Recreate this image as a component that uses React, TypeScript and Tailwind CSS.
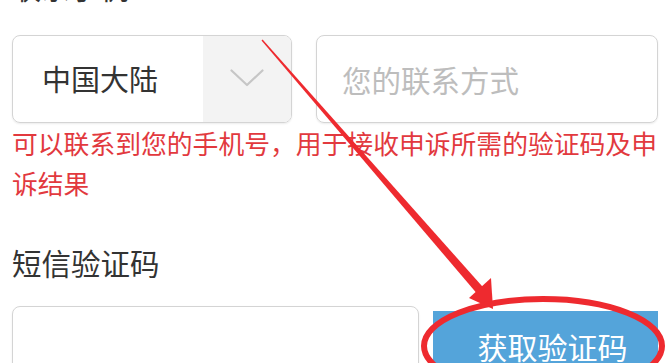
import React from 'react';

const cjk = { fontFamily: '"Noto Sans CJK SC", "Noto Sans", sans-serif' };

function Chevron() {
  return (
    <svg width="34" height="18" viewBox="0 0 34 18" fill="none">
      <path d="M1.5 1.5 L17 16 L32.5 1.5" stroke="#c6c6c6" strokeWidth="2.2" strokeLinecap="round" strokeLinejoin="round" />
    </svg>
  );
}

// red arrow + ellipse drawn over the screenshot
function Annotation() {
  return (
    <svg className="pointer-events-none absolute inset-0" width="672" height="363" viewBox="0 0 672 363">
      <polygon points="261.5,40.5 262.6,39.5 485.5,290 479,296" fill="#ee2a2f" />
      <polygon points="493,309 469,298 491,278" fill="#ee2a2f" />
      <ellipse cx="543" cy="346" rx="119" ry="47" fill="none" stroke="#ee2a2f" strokeWidth="6" />
    </svg>
  );
}

export default function App() {
  return (
    <div className="relative h-[363px] w-[672px] overflow-hidden bg-white" style={cjk}>
      <div className="mt-[-33px] pl-[12px] pr-[14px]">
        <div className="text-[29px] leading-[40px] text-[#333]">联系手机</div>

        <div className="mt-[28px] flex gap-[24px]">
          <div className="flex h-[88px] w-[280px] overflow-hidden rounded-[8px] border border-[#d4d4d4] shadow-[0_1px_2px_rgba(0,0,0,0.08)]">
            <div className="flex flex-1 items-center pl-[29px] text-[29px] text-[#333]">中国大陆</div>
            <div className="flex w-[88px] items-center justify-center bg-[#f3f3f3] pb-[2px]">
              <Chevron />
            </div>
          </div>
          <div className="flex h-[88px] flex-1 items-center rounded-[8px] border border-[#d4d4d4] pl-[25px] text-[29.5px] text-[#bdbdbd] shadow-[0_1px_2px_rgba(0,0,0,0.08)]">
            您的联系方式
          </div>
        </div>

        <p className="text-[25.8px] leading-[40px] text-[#e2393e]">
          可以联系到您的手机号，用于接收申诉所需的验证码及申诉结果
        </p>

        <div className="mt-[39px] text-[29.5px] leading-[40px] text-[#333]">短信验证码</div>

        <div className="mt-[24px] flex gap-[14px]">
          <div className="h-[90px] w-[407px] rounded-[8px] border border-[#d4d4d4] shadow-[0_1px_2px_rgba(0,0,0,0.08)]" />
          <div className="mt-[5px] flex h-[70px] flex-1 items-center justify-center bg-[#54a4da] pl-[14px] text-[30px] text-white">
            获取验证码
          </div>
        </div>
      </div>
      <Annotation />
    </div>
  );
}
